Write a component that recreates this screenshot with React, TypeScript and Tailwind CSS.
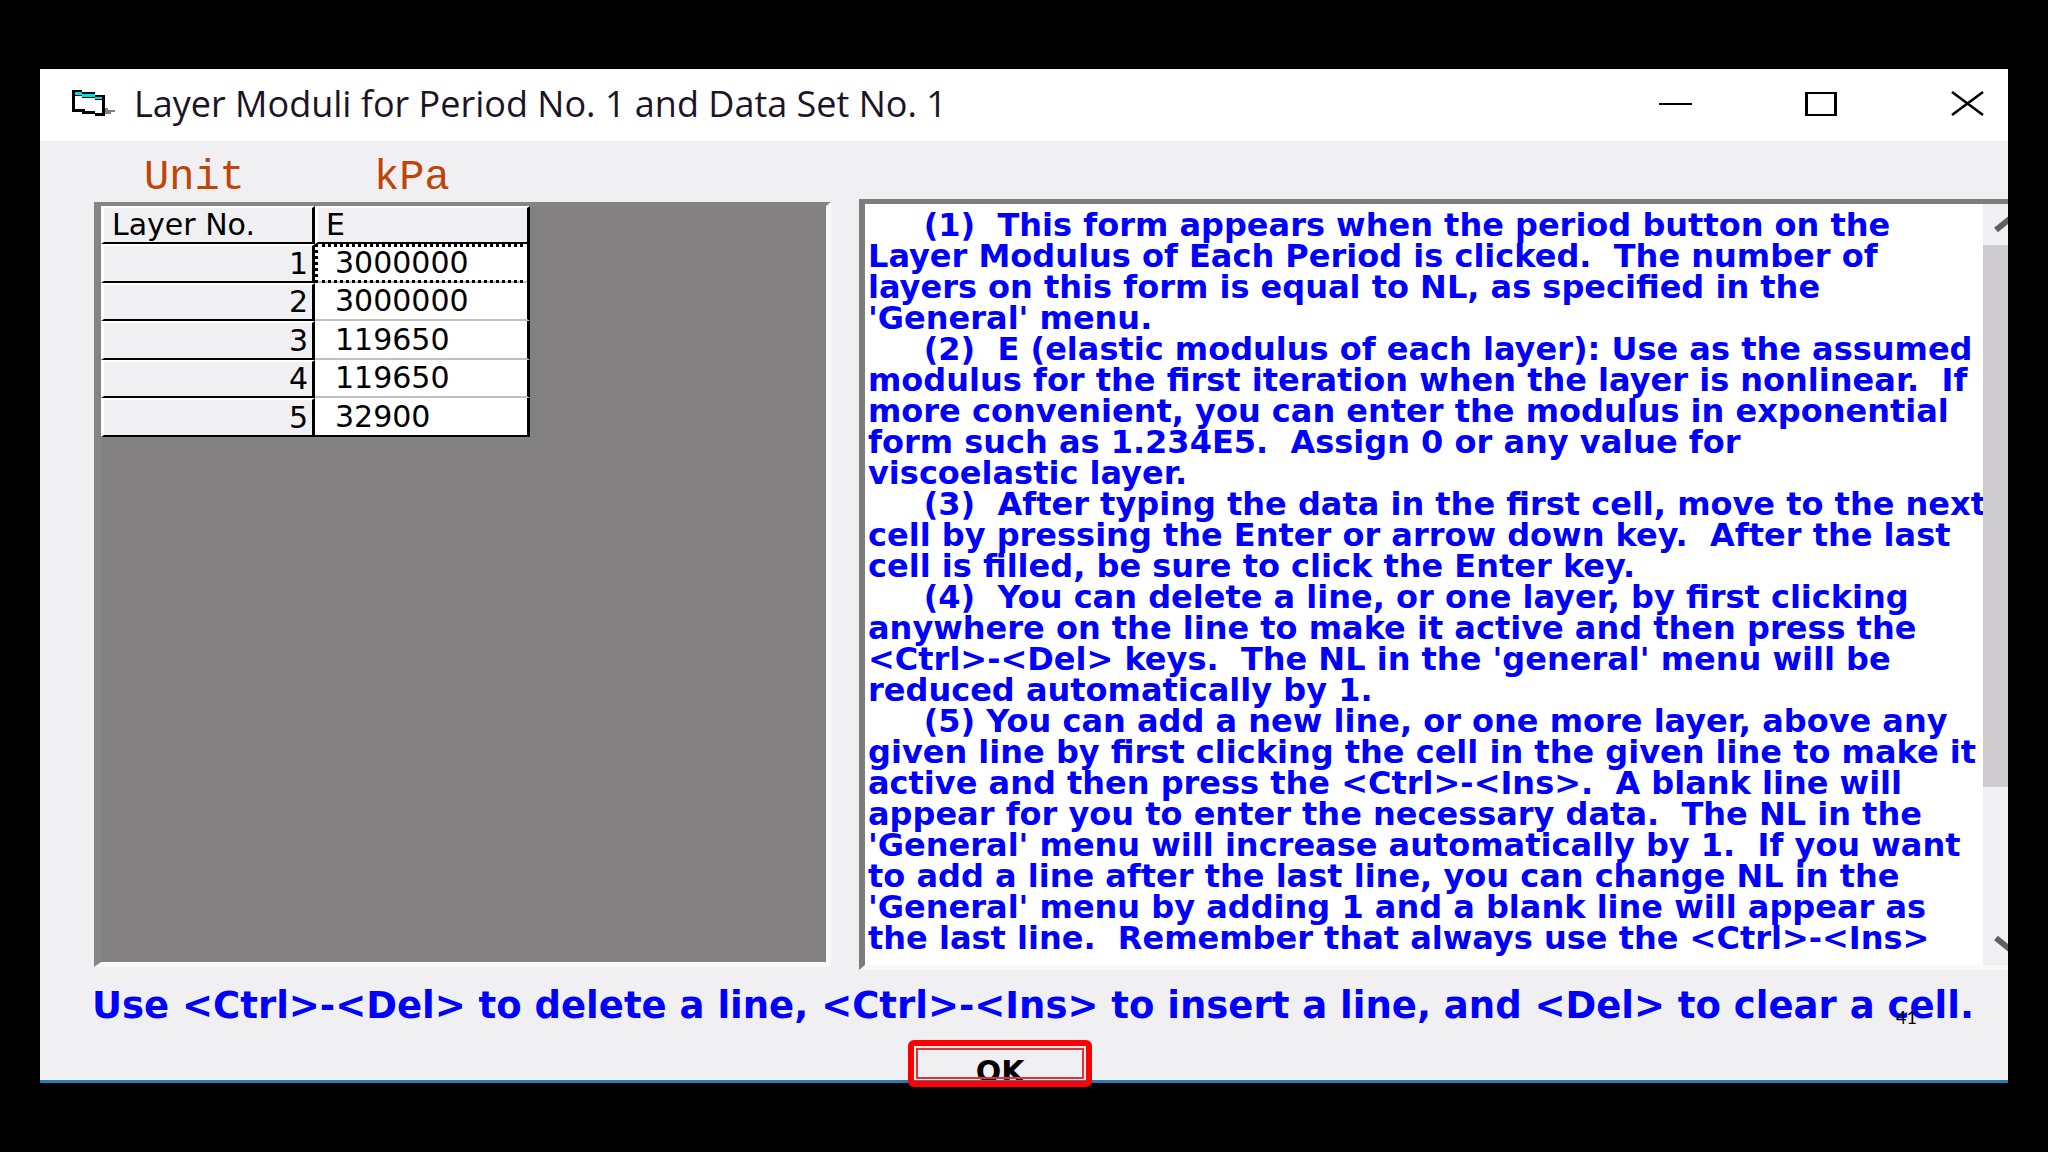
import { useState } from 'react';

const layers = [
  { no: 1, e: '3000000' },
  { no: 2, e: '3000000' },
  { no: 3, e: '119650' },
  { no: 4, e: '119650' },
  { no: 5, e: '32900' },
];

const helpLines = [
  '     (1)  This form appears when the period button on the',
  'Layer Modulus of Each Period is clicked.  The number of',
  'layers on this form is equal to NL, as specified in the',
  "'General' menu.",
  '     (2)  E (elastic modulus of each layer): Use as the assumed',
  'modulus for the first iteration when the layer is nonlinear.  If',
  'more convenient, you can enter the modulus in exponential',
  'form such as 1.234E5.  Assign 0 or any value for',
  'viscoelastic layer.',
  '     (3)  After typing the data in the first cell, move to the next',
  'cell by pressing the Enter or arrow down key.  After the last',
  'cell is filled, be sure to click the Enter key.',
  '     (4)  You can delete a line, or one layer, by first clicking',
  'anywhere on the line to make it active and then press the',
  "<Ctrl>-<Del> keys.  The NL in the 'general' menu will be",
  'reduced automatically by 1.',
  '     (5) You can add a new line, or one more layer, above any',
  'given line by first clicking the cell in the given line to make it',
  'active and then press the <Ctrl>-<Ins>.  A blank line will',
  'appear for you to enter the necessary data.  The NL in the',
  "'General' menu will increase automatically by 1.  If you want",
  'to add a line after the last line, you can change NL in the',
  "'General' menu by adding 1 and a blank line will appear as",
  'the last line.  Remember that always use the <Ctrl>-<Ins>',
];

function FormIcon() {
  return (
    <svg className="shrink-0" width="44" height="28" viewBox="0 0 44 28" shapeRendering="crispEdges" aria-hidden="true">
      <path d="M32 18h4v2h7v2h-4v2h-7z" fill="#808080" />
      <path d="M0 0h10v2h13v3h10v21h-10v-2H10v-2H0z" fill="#000" />
      <path d="M3 6h7v2h13v2h7v13h-7v-2H13v-2H3z" fill="#fff" />
      <path d="M3 2h7v3H3zM10 4h13v3H10zM23 7h7v2h-7z" fill="#00e0e0" />
    </svg>
  );
}

function TitleBar() {
  return (
    <header className="flex h-[72px] items-center bg-white pb-0.5 pl-8">
      <FormIcon />
      <h1 className="ml-[18px] flex-1 font-['Open_Sans','Noto_Sans',sans-serif] text-[36px] leading-10 whitespace-nowrap text-[#1c1426]">
        Layer Moduli for Period No. 1 and Data Set No. 1
      </h1>
      <div className="flex h-full gap-16">
        <button type="button" aria-label="Minimize" className="flex w-[82px] items-center justify-center">
          <svg width="33" height="26" viewBox="0 0 33 26" shapeRendering="crispEdges">
            <path d="M0 12h33v2H0z" />
          </svg>
        </button>
        <button type="button" aria-label="Maximize" className="flex w-[82px] items-center justify-center">
          <svg width="33" height="26" viewBox="0 0 33 26" shapeRendering="crispEdges">
            <path fillRule="evenodd" d="M0 1h32v24H0zM3 3v20h26V3z" />
          </svg>
        </button>
        <button type="button" aria-label="Close" className="flex w-[82px] items-center justify-center">
          <svg width="33" height="26" viewBox="0 0 33 26">
            <path d="M1 1l31 23M32 1L1 24" stroke="#000" strokeWidth="2.6" fill="none" />
          </svg>
        </button>
      </div>
    </header>
  );
}

function LayerGrid() {
  const [active, setActive] = useState(1);
  const fixed = 'border-t-2 border-r-3 border-b-2 border-l-3 border-t-white border-r-black border-b-black border-l-white bg-[#f0eff1]';

  return (
    <div className="mt-[3px] mb-[3px] border-t-4 border-r-5 border-b-5 border-l-7 border-t-[#858585] border-r-[#f8f8f8] border-b-[#f8f8f8] border-l-[#858585] bg-[#828081]">
      <table className="w-[429px] table-fixed border-separate border-spacing-0 font-['DejaVu_Sans',sans-serif] text-[30px] leading-8 text-black">
        <thead>
          <tr className="h-[38px]">
            <th scope="col" className={`w-[214px] p-0 pl-2 text-left font-normal ${fixed}`}>Layer No.</th>
            <th scope="col" className={`p-0 pl-2 text-left font-normal ${fixed}`}>E</th>
          </tr>
        </thead>
        <tbody>
          {layers.map(l => (
            <tr key={l.no} className="h-[38px] odd:h-[39px]">
              <th scope="row" className={`p-0 pr-1 text-right font-normal ${fixed}`}>{l.no}</th>
              <td
                onClick={() => setActive(l.no)}
                className={`border-r-3 border-b-2 border-r-black bg-white p-0 pl-5 ${
                  l.no === layers.length ? 'border-b-black' : 'border-b-[#c0c0c0]'
                } ${active === l.no ? 'outline-3 -outline-offset-3 outline-dotted outline-black' : ''}`}
              >
                {l.e}
              </td>
            </tr>
          ))}
        </tbody>
      </table>
    </div>
  );
}

function HelpBox() {
  return (
    <div className="flex border-t-5 border-b-5 border-l-6 border-t-[#7d7d7d] border-b-[#f8f8f8] border-l-[#7d7d7d] bg-white">
      <textarea
        readOnly
        aria-label="Help"
        rows={24}
        value={helpLines.join('\n')}
        className="block min-w-0 flex-1 resize-none overflow-hidden bg-white pt-1.5 pb-[11px] pl-[3px] font-['DejaVu_Sans',sans-serif] text-[32px] leading-[31px] font-bold whitespace-pre text-[#0000ff] outline-none"
      />
      <div className="flex w-[25px] shrink-0 flex-col bg-[#f0eff1]">
        <svg className="h-[41px] w-full" viewBox="0 0 25 41">
          <path d="M13 26l16-13" stroke="#606060" strokeWidth="6" fill="none" />
        </svg>
        <div className="h-[542px] bg-[#cdcbcd]" />
        <svg className="mt-auto h-[41px] w-full" viewBox="0 0 25 41">
          <path d="M13 14l16 13" stroke="#606060" strokeWidth="6" fill="none" />
        </svg>
      </div>
    </div>
  );
}

export default function App() {
  return (
    <div className="min-h-screen bg-black px-10 pt-[69px]">
      <main className="relative border-b-3 border-[#2a7ab8] bg-[#f0eff1]">
        <TitleBar />

        <div className="flex h-[58px] items-center pl-[104px] font-['Liberation_Mono',monospace] text-[42px] leading-10 text-[#c04408]">
          <span className="w-[230px] pt-4">Unit</span>
          <span className="pt-4">kPa</span>
        </div>

        <div className="grid grid-cols-[737fr_1149fr] gap-x-7 pl-[54px]">
          <LayerGrid />
          <HelpBox />
        </div>

        <div className="relative mt-4 pl-[52px]">
          <p className="font-['DejaVu_Sans',sans-serif] text-[37px] leading-10 font-bold whitespace-nowrap text-[#0000ff]">
            Use &lt;Ctrl&gt;-&lt;Del&gt; to delete a line, &lt;Ctrl&gt;-&lt;Ins&gt; to insert a line, and &lt;Del&gt; to clear a cell.
          </p>
          <span className="absolute right-[91px] bottom-[-1px] font-['Lato',sans-serif] text-lg leading-5 text-black">41</span>
        </div>

        <div className="mt-4 flex h-[38px] justify-center overflow-hidden pr-12">
          <button type="button" className="h-[60px] w-[172px] font-['DejaVu_Sans',sans-serif] text-[30px] leading-8 font-bold text-black">
            OK
          </button>
        </div>

        {/* highlight frame around the OK button */}
        <div className="pointer-events-none absolute inset-x-0 bottom-[-7px] flex justify-center pr-12">
          <div className="h-[47px] w-[184px] rounded-md border-6 border-[#ff0000] p-0.5">
            <div className="h-full border-2 border-[#e83030]" />
          </div>
        </div>
      </main>
    </div>
  );
}
